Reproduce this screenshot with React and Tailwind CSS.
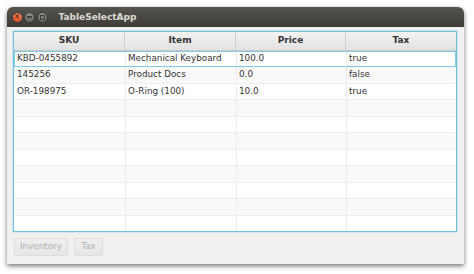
import React from "react";

const rows = [
  ["KBD-0455892", "Mechanical Keyboard", "100.0", "true"],
  ["145256", "Product Docs", "0.0", "false"],
  ["OR-198975", "O-Ring (100)", "10.0", "true"],
];

const widths = ["w-[111px]", "w-[111px]", "w-[110px]", "flex-1"];
const headers = ["SKU", "Item", "Price", "Tax"];

function Row({ data, index }) {
  const bg = index % 2 === 0 ? "bg-white" : "bg-[#f9f9f9]";
  const selected = index === 0;
  return (
    <div
      className={`flex h-[16.5px] shrink-0 ${bg} ${
        selected ? "border border-[#7fcde4]" : "border-b border-b-[#eeeeee] border-x border-x-transparent"
      }`}
    >
      {widths.map((w, i) => (
        <div
          key={i}
          className={`${w} h-full flex items-center pl-[2px] text-[8.8px] text-[#333] whitespace-nowrap ${
            i < 3 ? "border-r border-r-[#ececec]" : ""
          }`}
        >
          {data ? data[i] : ""}
        </div>
      ))}
    </div>
  );
}

export default function App() {
  const all = [...rows, ...Array(8).fill(null)];
  return (
    <div
      className="w-[474px] h-[274px] bg-white pt-[7px] pl-[7px]"
      style={{ fontFamily: '"DejaVu Sans", sans-serif' }}
    >
      <div className="w-[457px] h-[257px] flex flex-col rounded-t-[6px] overflow-hidden shadow-[0_2px_5px_rgba(0,0,0,0.55)] bg-[#f1f1f1]">
        {/* Title bar */}
        <div className="h-[20px] shrink-0 flex items-center bg-gradient-to-b from-[#55544f] to-[#3d3c38] pl-[4.5px]">
          <div className="flex items-center gap-[1.5px]">
            <div className="w-[11px] h-[11px] rounded-full bg-gradient-to-b from-[#f6885e] to-[#e0501f] border border-[#3a3935] flex items-center justify-center">
              <span className="text-[8px] leading-none text-[#7a2e12] font-bold">×</span>
            </div>
            <div className="w-[11px] h-[11px] rounded-full bg-gradient-to-b from-[#8e8d88] to-[#686761] border border-[#3a3935] flex items-center justify-center">
              <div className="w-[5px] h-[1.5px] bg-[#3f3e3a]" />
            </div>
            <div className="w-[11px] h-[11px] rounded-full bg-gradient-to-b from-[#8e8d88] to-[#686761] border border-[#3a3935] flex items-center justify-center">
              <div className="w-[5px] h-[5px] border border-[#3f3e3a]" />
            </div>
          </div>
          <span className="ml-[11px] text-[9px] font-bold text-[#dfdbd2] leading-none">
            TableSelectApp
          </span>
        </div>

        {/* Content */}
        <div className="flex-1 flex flex-col pt-[4px] pl-[6px] pr-[7px]">
          <div className="w-[444px] h-[201px] border border-[#6fc2dc] shadow-[0_0_0_0.5px_rgba(111,194,220,0.5)] bg-white flex flex-col overflow-hidden">
            {/* Header */}
            <div className="h-[18.5px] shrink-0 flex bg-gradient-to-b from-[#f3f3f3] to-[#e2e2e2] border-b border-b-[#c8c8c8]">
              {headers.map((h, i) => (
                <div
                  key={h}
                  className={`${widths[i]} h-full flex items-center justify-center text-[9px] font-bold text-[#333] ${
                    i < 3 ? "border-r border-r-[#cfcfcf]" : ""
                  }`}
                >
                  {h}
                </div>
              ))}
            </div>
            {all.map((r, i) => (
              <Row key={i} data={r} index={i} />
            ))}
          </div>

          <div className="flex gap-[6px] mt-[6px] pl-[1px]">
            <div className="w-[54px] h-[18px] flex items-center justify-center border border-[#dedede] rounded-[2px] bg-gradient-to-b from-[#efefef] to-[#e6e6e6] text-[8.8px] text-[#b0b0b0]">
              Inventory
            </div>
            <div className="w-[29px] h-[18px] flex items-center justify-center border border-[#dedede] rounded-[2px] bg-gradient-to-b from-[#efefef] to-[#e6e6e6] text-[8.8px] text-[#b0b0b0]">
              Tax
            </div>
          </div>
        </div>
      </div>
    </div>
  );
}
